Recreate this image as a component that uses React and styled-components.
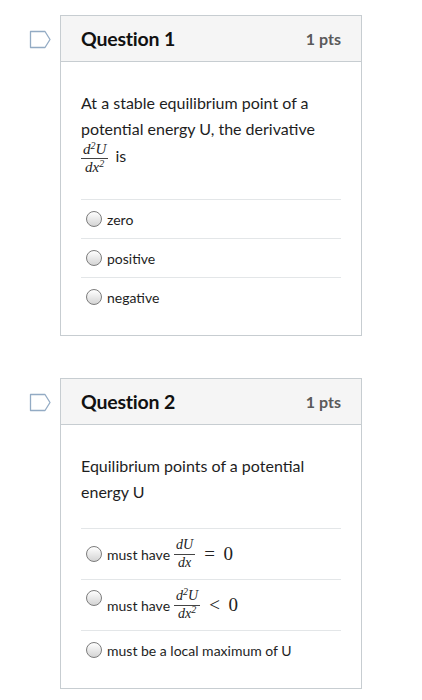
import React from "react";
import styled, { createGlobalStyle } from "styled-components";

const GlobalStyle = createGlobalStyle`
  body {
    margin: 0;
    background: #ffffff;
    font-family: Lato, "Open Sans", sans-serif;
    color: #222;
  }
`;

const Page = styled.div`
  display: flex;
  flex-direction: column;
  gap: 42px;
  padding: 15px 0 0 29px;
`;

const QuestionRow = styled.div`
  display: flex;
  align-items: flex-start;
  gap: 8px;
`;

const Marker = styled.div`
  display: flex;
  align-items: center;
  height: 46px;
  padding-top: 1px;
`;

const Card = styled.div`
  width: 300px;
  border: 1px solid #c7cdd1;
  background: #fff;
`;

const Header = styled.div`
  display: flex;
  align-items: center;
  justify-content: space-between;
  height: 45px;
  padding: 0 20px;
  background: #f5f5f5;
  border-bottom: 1px solid #c7cdd1;
`;

const Title = styled.div`
  font-size: 19.5px;
  font-weight: 700;
  color: #111;
  letter-spacing: -0.2px;
`;

const Points = styled.div`
  font-size: 16px;
  font-weight: 700;
  color: #5a5a5a;
`;

const Body = styled.div`
  padding: 28px 20px 19px;
`;

const Prompt = styled.div`
  font-size: 16px;
  line-height: 26px;
  color: #1e1e1e;
  margin-bottom: ${(p) => p.$gap}px;
`;

const Options = styled.div`
  border-top: 1px solid #e3e6e8;
`;

const Option = styled.div`
  display: flex;
  align-items: center;
  gap: 5px;
  min-height: 20px;
  padding: 9px 5px;
  border-bottom: 1px solid #e3e6e8;

  &:last-child {
    border-bottom: none;
  }
`;

const Radio = styled.span`
  flex: none;
  width: 14px;
  height: 14px;
  border-radius: 50%;
  border: 1px solid #7c7c7c;
  background: linear-gradient(#ffffff, #d4d4d4);
  align-self: ${(p) => (p.$top ? "flex-start" : "center")};
  margin-top: ${(p) => (p.$top ? "1px" : "0")};
`;

const Label = styled.span`
  display: flex;
  align-items: center;
  gap: 4px;
  font-size: 14px;
  color: #1e1e1e;
  white-space: nowrap;
`;

const FracBox = styled.span`
  display: inline-flex;
  flex-direction: column;
  align-items: center;
  vertical-align: middle;
  font-family: "Liberation Serif", "DejaVu Serif", serif;
  font-style: italic;
  font-size: ${(p) => (p.$big ? "14px" : "15px")};
  line-height: 14px;
  margin: 0 ${(p) => (p.$big ? "5px" : "3px")} 0 0;
  color: #222;

  sup {
    font-size: 10px;
    line-height: 0;
    vertical-align: 5px;
  }
`;

const FracPart = styled.span`
  padding: 0 2px;
`;

const FracBar = styled.span`
  align-self: stretch;
  height: 1px;
  background: #444;
  margin: 2px 0 1px;
`;

const MathOp = styled.span`
  font-family: "Liberation Serif", "DejaVu Serif", serif;
  font-size: 19px;
  color: #222;
  word-spacing: 4px;
`;

function Frac({ num, den, big }) {
  return (
    <FracBox $big={big}>
      <FracPart>{num}</FracPart>
      <FracBar />
      <FracPart>{den}</FracPart>
    </FracBox>
  );
}

const Bookmark = () => (
  <svg width="23" height="19" viewBox="0 0 23 19">
    <path
      d="M1.5 1.5 H16 L21 9.5 L16 17.5 H1.5 Z"
      fill="none"
      stroke="#93abc4"
      strokeWidth="1.3"
      strokeLinejoin="round"
    />
  </svg>
);

const getQuestions = () => [
  {
    title: "Question 1",
    points: "1 pts",
    text: (
      <>
        At a stable equilibrium point of a potential energy U, the derivative{" "}
        <Frac num={<>d<sup>2</sup>U</>} den={<>dx<sup>2</sup></>} /> is
      </>
    ),
    gap: 25,
    options: [{ label: "zero" }, { label: "positive" }, { label: "negative" }],
  },
  {
    title: "Question 2",
    points: "1 pts",
    text: <>Equilibrium points of a potential energy U</>,
    gap: 23,
    options: [
      {
        label: (
          <>
            must have <Frac num="dU" den="dx" big /> <MathOp>= 0</MathOp>
          </>
        ),
      },
      {
        label: (
          <>
            must have{" "}
            <Frac num={<>d<sup>2</sup>U</>} den={<>dx<sup>2</sup></>} big />{" "}
            <MathOp>&lt; 0</MathOp>
          </>
        ),
        top: true,
      },
      { label: "must be a local maximum of U" },
    ],
  },
];

const App = () => (
  <>
    <GlobalStyle />
    <Page>
      {getQuestions().map((q) => (
        <QuestionRow key={q.title}>
          <Marker>
            <Bookmark />
          </Marker>
          <Card>
            <Header>
              <Title>{q.title}</Title>
              <Points>{q.points}</Points>
            </Header>
            <Body>
              <Prompt $gap={q.gap}>{q.text}</Prompt>
              <Options>
                {q.options.map((o, i) => (
                  <Option key={i}>
                    <Radio $top={o.top} />
                    <Label>{o.label}</Label>
                  </Option>
                ))}
              </Options>
            </Body>
          </Card>
        </QuestionRow>
      ))}
    </Page>
  </>
);

export default App;
